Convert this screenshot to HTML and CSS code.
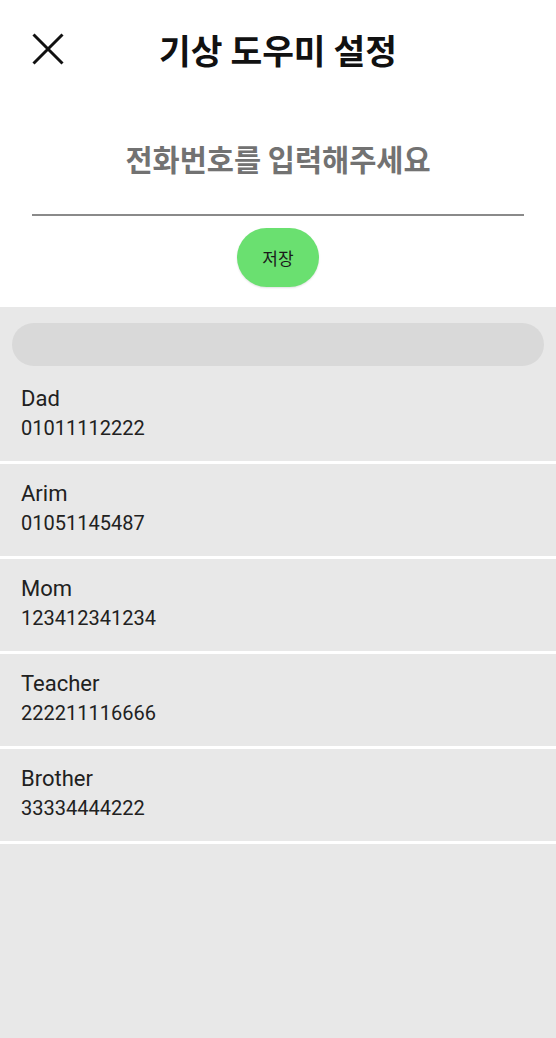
FILE: index.html
```html
<html>
  <head>
    <title>기상 도우미 설정</title>
    <link rel="stylesheet" href="styles.css">
  </head>
  <body>
    <header class="topbar">
      <button class="close" aria-label="닫기">
        <svg width="32" height="32" viewBox="0 0 32 32">
          <path d="M1.5 1.5 L30.5 30.5 M30.5 1.5 L1.5 30.5" stroke="#111" stroke-width="3" fill="none" />
        </svg>
      </button>
      <h1>기상 도우미 설정</h1>
      <span></span>
    </header>

    <form class="phone-form">
      <input class="phone-input" type="tel" placeholder="전화번호를 입력해주세요" />
      <button class="save" type="button">저장</button>
    </form>

    <main class="contacts">
      <div class="search-wrap">
        <div class="search"></div>
      </div>
      <ul>
        <li><span class="name">Dad</span><span class="number">01011112222</span></li>
        <li><span class="name">Arim</span><span class="number">01051145487</span></li>
        <li><span class="name">Mom</span><span class="number">123412341234</span></li>
        <li><span class="name">Teacher</span><span class="number">222211116666</span></li>
        <li><span class="name">Brother</span><span class="number">33334444222</span></li>
      </ul>
    </main>
  </body>
</html>
```

FILE: styles.css
```css
html, body {
    margin: 0;
    height: 100%;
}
body {
    font-family: Roboto, "Noto Sans CJK KR", sans-serif;
    background: #e8e8e8;
    display: flex;
    flex-direction: column;
}

.topbar {
    background: #fff;
    height: 98px;
    display: grid;
    grid-template-columns: 1fr auto 1fr;
    align-items: center;
}
.close {
    justify-self: start;
    margin-left: 32px;
    padding: 0;
    border: none;
    background: none;
    width: 32px;
    height: 32px;
}
.close svg {
    display: block;
}
.topbar h1 {
    margin: 0;
    font-family: "Noto Sans CJK KR", sans-serif;
    font-size: 34.5px;
    font-weight: bold;
    line-height: 42px;
    color: #111;
}

.phone-form {
    background: #fff;
    margin: 0;
    padding: 32px 32px 20px;
    display: flex;
    flex-direction: column;
    align-items: center;
}
.phone-input {
    box-sizing: border-box;
    width: 100%;
    height: 86px;
    padding: 0 0 29px;
    border: none;
    border-bottom: 2px solid #8a8a8a;
    outline: none;
    background: none;
    text-align: center;
    font-family: "Noto Sans CJK KR", sans-serif;
    font-size: 29.5px;
    font-weight: bold;
}
.phone-input::placeholder {
    color: #727272;
}
.save {
    margin-top: 12px;
    width: 82px;
    height: 59px;
    border: none;
    border-radius: 30px;
    background: #6ae070;
    box-shadow: 0 1px 2px rgba(0, 0, 0, 0.12);
    font-family: "Noto Sans CJK KR", sans-serif;
    font-size: 17px;
    color: #1a1a1a;
}

.contacts {
    flex: 1;
    background: #e8e8e8;
    padding-top: 16px;
}
.search-wrap {
    padding: 0 12px;
    margin-bottom: 3px;
}
.search {
    height: 43px;
    border-radius: 22px;
    background: #d9d9d9;
}
.contacts ul {
    list-style: none;
    margin: 0;
    padding: 0;
}
.contacts li {
    box-sizing: content-box;
    height: 75px;
    padding: 17px 21px 0;
    border-bottom: 3px solid #fff;
    display: flex;
    flex-direction: column;
    color: #212121;
}
.name {
    font-size: 22px;
    line-height: 26px;
}
.number {
    margin-top: 4px;
    font-size: 20px;
    line-height: 24px;
}
```
